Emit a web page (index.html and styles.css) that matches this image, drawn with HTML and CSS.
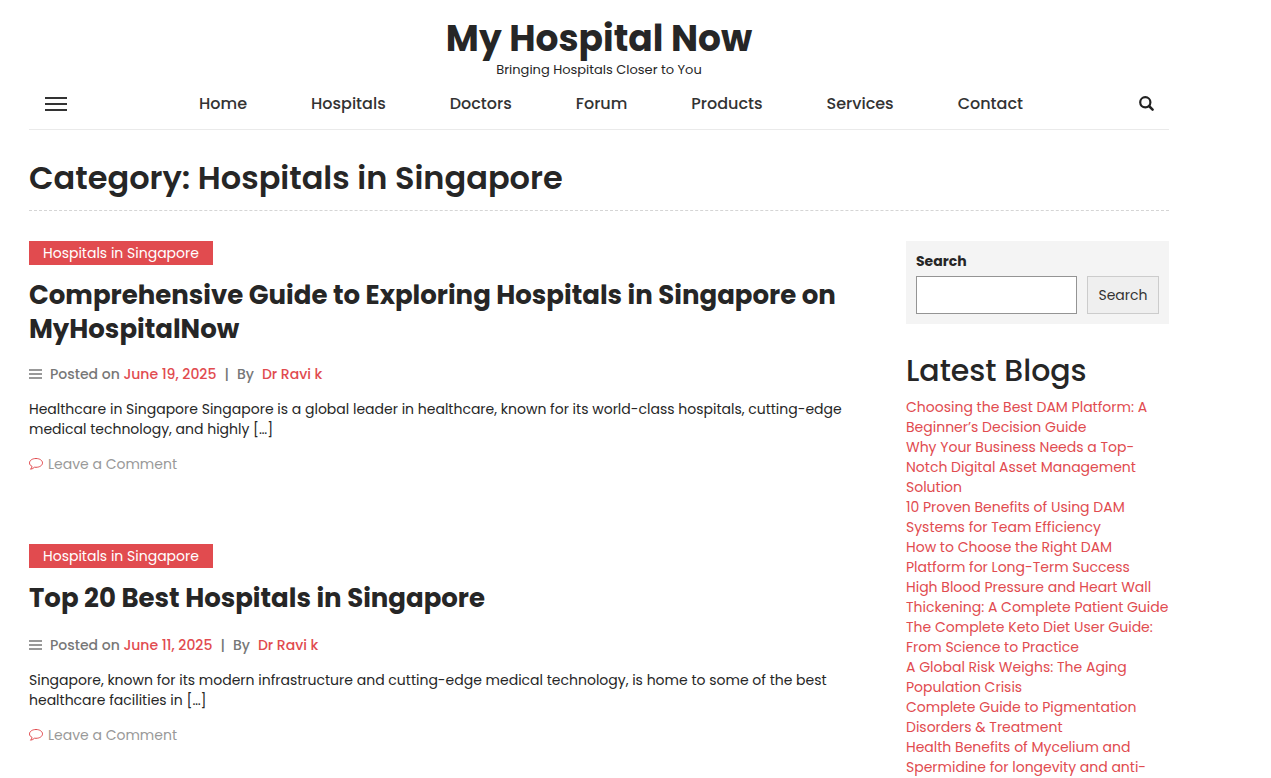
FILE: index.html
```html
<!DOCTYPE html>
<html lang="en">
<head>
    <meta charset="UTF-8">
    <meta name="viewport" content="width=device-width, initial-scale=1">
    <title>Hospitals in Singapore - My Hospital Now</title>
    <link rel="stylesheet" href="styles.css">
</head>
<body>
    <div class="container">
        <header class="site-header">
            <a class="site-title" href="#">My Hospital Now</a>
            <p class="site-tagline">Bringing Hospitals Closer to You</p>
            <div class="navbar">
                <button class="icon-btn" type="button" aria-label="Menu">
                    <svg width="22" height="14" viewBox="0 0 22 14"><path d="M0 0h22v2H0zM0 6h22v2H0zM0 12h22v2H0z" fill="#333"/></svg>
                </button>
                <nav class="main-nav">
                    <a href="#">Home</a>
                    <a href="#">Hospitals</a>
                    <a href="#">Doctors</a>
                    <a href="#">Forum</a>
                    <a href="#">Products</a>
                    <a href="#">Services</a>
                    <a href="#">Contact</a>
                </nav>
                <button class="icon-btn" type="button" aria-label="Open search">
                    <svg width="15" height="15" viewBox="0 0 15 15" fill="none" stroke="#222"><circle cx="6.3" cy="6.3" r="5.1" stroke-width="2.2"/><path d="M10 10l3.6 3.6" stroke-width="2.5" stroke-linecap="round"/></svg>
                </button>
            </div>
        </header>

        <h1 class="page-title">Category: Hospitals in Singapore</h1>

        <div class="layout">
            <main class="posts">
                <article class="post">
                    <a class="badge" href="#">Hospitals in Singapore</a>
                    <h2 class="post-title"><a href="#">Comprehensive Guide to Exploring Hospitals in Singapore on MyHospitalNow</a></h2>
                    <div class="post-meta">
                        <svg width="13" height="10" viewBox="0 0 13 10"><path d="M0 0h13v2H0zM0 4h13v2H0zM0 8h13v2H0z" fill="#999"/></svg>
                        <span>Posted on <a href="#">June 19, 2025</a></span>
                        <span>|</span>
                        <span>By</span>
                        <a href="#">Dr Ravi k</a>
                    </div>
                    <p class="excerpt">Healthcare in Singapore Singapore is a global leader in healthcare, known for its world-class hospitals, cutting-edge medical technology, and highly […]</p>
                    <a class="comment-link" href="#">
                        <svg width="14" height="12" viewBox="0 0 14 12" fill="none" stroke="#e14b4f"><path d="M7 .5C3.400.5.5 2.400.5 4.900c0 1.500 1 2.800 2.600 3.600-.2 1.100-.8 1.900-1.600 2.700 1.600-.2 3-.9 4-2l1.500.1c3.600 0 6.500-1.900 6.500-4.400S10.600.5 7 .5z" stroke-linejoin="round"/></svg>
                        Leave a Comment
                    </a>
                </article>

                <article class="post">
                    <a class="badge" href="#">Hospitals in Singapore</a>
                    <h2 class="post-title"><a href="#">Top 20 Best Hospitals in Singapore</a></h2>
                    <div class="post-meta">
                        <svg width="13" height="10" viewBox="0 0 13 10"><path d="M0 0h13v2H0zM0 4h13v2H0zM0 8h13v2H0z" fill="#999"/></svg>
                        <span>Posted on <a href="#">June 11, 2025</a></span>
                        <span>|</span>
                        <span>By</span>
                        <a href="#">Dr Ravi k</a>
                    </div>
                    <p class="excerpt">Singapore, known for its modern infrastructure and cutting-edge medical technology, is home to some of the best healthcare facilities in […]</p>
                    <a class="comment-link" href="#">
                        <svg width="14" height="12" viewBox="0 0 14 12" fill="none" stroke="#e14b4f"><path d="M7 .5C3.400.5.5 2.400.5 4.900c0 1.500 1 2.800 2.600 3.600-.2 1.100-.8 1.900-1.600 2.700 1.600-.2 3-.9 4-2l1.500.1c3.600 0 6.500-1.900 6.500-4.400S10.600.5 7 .5z" stroke-linejoin="round"/></svg>
                        Leave a Comment
                    </a>
                </article>
            </main>

            <aside class="sidebar">
                <form class="search-box" role="search">
                    <label for="search">Search</label>
                    <div class="search-row">
                        <input id="search" type="search" name="s">
                        <button type="submit">Search</button>
                    </div>
                </form>
                <h2 class="widget-title">Latest Blogs</h2>
                <ul class="blog-list">
                    <li><a href="#">Choosing the Best DAM Platform: A Beginner’s Decision Guide</a></li>
                    <li><a href="#">Why Your Business Needs a Top-Notch Digital Asset Management Solution</a></li>
                    <li><a href="#">10 Proven Benefits of Using DAM Systems for Team Efficiency</a></li>
                    <li><a href="#">How to Choose the Right DAM Platform for Long-Term Success</a></li>
                    <li><a href="#">High Blood Pressure and Heart Wall Thickening: A Complete Patient Guide</a></li>
                    <li><a href="#">The Complete Keto Diet User Guide: From Science to Practice</a></li>
                    <li><a href="#">A Global Risk Weighs: The Aging Population Crisis</a></li>
                    <li><a href="#">Complete Guide to Pigmentation Disorders &amp; Treatment</a></li>
                    <li><a href="#">Health Benefits of Mycelium and Spermidine for longevity and anti-</a></li>
                </ul>
            </aside>
        </div>
    </div>
</body>
</html>
```

FILE: styles.css
```css
* {
    box-sizing: border-box;
}
body {
    margin: 0;
    padding: 0 102px 0 29px;
    font-family: Poppins, Inter, sans-serif;
    font-size: 14px;
    line-height: 20px;
    color: #262626;
    background: #fff;
}
a {
    color: #e14b4f;
    text-decoration: none;
}
.container {
    max-width: 1140px;
}
.site-header {
    display: flex;
    flex-direction: column;
    align-items: center;
    padding: 18px 0 2px;
    border-bottom: 1px solid #eaeaea;
}
.site-title {
    font-size: 36px;
    line-height: 42px;
    font-weight: 700;
    color: #262626;
}
.site-tagline {
    margin: 0;
    font-size: 13px;
}
.navbar {
    display: flex;
    align-items: center;
    justify-content: space-between;
    width: 100%;
    height: 47px;
    padding: 0 15px 0 16px;
}
.icon-btn {
    display: flex;
    padding: 0;
    border: none;
    background: none;
    cursor: pointer;
}
.main-nav {
    display: flex;
    gap: 64px;
    padding-left: 16px;
    font-size: 16px;
    font-weight: 500;
}
.main-nav a {
    color: #333;
}
.page-title {
    margin: 26px 0 30px;
    padding-bottom: 10px;
    border-bottom: 1px dashed #d5d5d5;
    font-size: 32px;
    line-height: 44px;
    font-weight: 600;
}
.layout {
    display: grid;
    grid-template-columns: minmax(0, 1fr) 263px;
    gap: 30px;
}
.posts {
    display: flex;
    flex-direction: column;
    gap: 70px;
}
.post {
    display: flex;
    flex-direction: column;
    align-items: flex-start;
}
.badge {
    padding: 2px 14px;
    background: #e14b4f;
    color: #fff;
}
.post-title {
    min-height: 36px;
    margin: 13px 0 18px;
    font-size: 26px;
    line-height: 34px;
    font-weight: 700;
}
.post-title a {
    color: #262626;
}
.post-meta {
    display: flex;
    align-items: center;
    gap: 8px;
    font-weight: 500;
    color: #777;
}
.excerpt {
    margin: 15px 0;
}
.comment-link {
    display: flex;
    align-items: center;
    gap: 5px;
    color: #999;
}
.search-box {
    padding: 10px;
    background: #f4f4f4;
}
.search-box label {
    display: block;
    margin-bottom: 5px;
    font-weight: 700;
}
.search-row {
    display: flex;
    gap: 10px;
}
.search-row input {
    flex: 1;
    min-width: 0;
    height: 38px;
    padding: 8px;
    border: 1px solid #949494;
    border-radius: 0;
    background: #fff;
    font: inherit;
}
.search-row button {
    width: 72px;
    border: 1px solid #ccc;
    background: #efefef;
    color: #333;
    font: inherit;
    cursor: pointer;
}
.widget-title {
    margin: 28px 0 7px;
    font-size: 30px;
    line-height: 38px;
    font-weight: 500;
}
.blog-list {
    margin: 0;
    padding: 0;
    list-style: none;
}
```
